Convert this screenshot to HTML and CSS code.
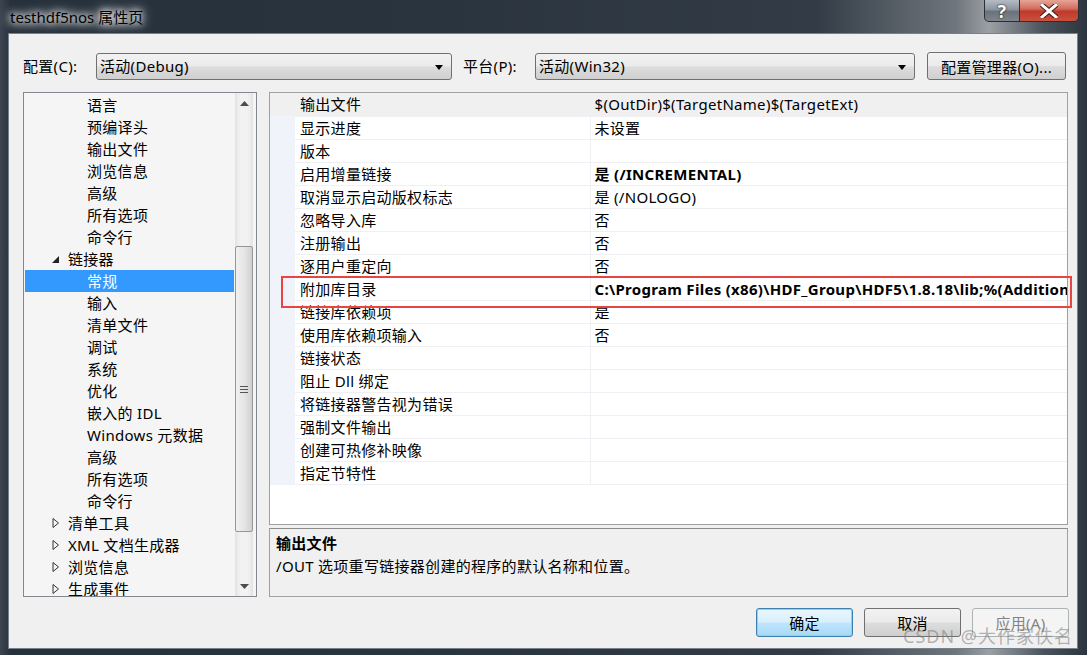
FILE: index.html
```html
<!DOCTYPE html>
<html lang="zh-CN">
<head>
  <meta charset="UTF-8">
  <title>testhdf5nos 属性页</title>
  <link rel="stylesheet" href="styles.css">
</head>
<body>
<div class="window">
  <div class="titlebar">
    <span class="title">testhdf5nos 属性页</span>
    <div class="caption-btns">
      <span class="cap-btn help">?</span>
      <span class="cap-btn close">
        <svg width="18" height="14" viewBox="0 0 18 14"><path d="M2 1 L16 13 M16 1 L2 13" stroke="#3a1a14" stroke-width="5" stroke-linecap="square"/><path d="M2 1 L16 13 M16 1 L2 13" stroke="#fff" stroke-width="3" stroke-linecap="square"/></svg>
      </span>
    </div>
  </div>

  <div class="client">
    <div class="config-row">
      <span class="lbl lbl-config">配置(C):</span>
      <div class="combo combo-config">活动(Debug)<span class="drop-arrow"></span></div>
      <span class="lbl lbl-platform">平台(P):</span>
      <div class="combo combo-platform">活动(Win32)<span class="drop-arrow"></span></div>
      <button class="btn btn-manager">配置管理器(O)...</button>
    </div>

    <div class="main">
      <!-- 左侧树 -->
      <div class="tree">
        <ul class="tree-list">
          <li class="lv2">语言</li>
          <li class="lv2">预编译头</li>
          <li class="lv2">输出文件</li>
          <li class="lv2">浏览信息</li>
          <li class="lv2">高级</li>
          <li class="lv2">所有选项</li>
          <li class="lv2">命令行</li>
          <li class="lv1"><span class="exp open"><svg width="8" height="8" viewBox="0 0 8 8"><path d="M7 0 L7 7 L0 7 Z" fill="#222"/></svg></span>链接器</li>
          <li class="lv2 selected">常规</li>
          <li class="lv2">输入</li>
          <li class="lv2">清单文件</li>
          <li class="lv2">调试</li>
          <li class="lv2">系统</li>
          <li class="lv2">优化</li>
          <li class="lv2">嵌入的 IDL</li>
          <li class="lv2">Windows 元数据</li>
          <li class="lv2">高级</li>
          <li class="lv2">所有选项</li>
          <li class="lv2">命令行</li>
          <li class="lv1"><span class="exp"><svg width="8" height="10" viewBox="0 0 8 10"><path d="M1 0.5 L6.5 5 L1 9.5 Z" fill="none" stroke="#333" stroke-width="1"/></svg></span>清单工具</li>
          <li class="lv1"><span class="exp"><svg width="8" height="10" viewBox="0 0 8 10"><path d="M1 0.5 L6.5 5 L1 9.5 Z" fill="none" stroke="#333" stroke-width="1"/></svg></span>XML 文档生成器</li>
          <li class="lv1"><span class="exp"><svg width="8" height="10" viewBox="0 0 8 10"><path d="M1 0.5 L6.5 5 L1 9.5 Z" fill="none" stroke="#333" stroke-width="1"/></svg></span>浏览信息</li>
          <li class="lv1"><span class="exp"><svg width="8" height="10" viewBox="0 0 8 10"><path d="M1 0.5 L6.5 5 L1 9.5 Z" fill="none" stroke="#333" stroke-width="1"/></svg></span>生成事件</li>
        </ul>
        <div class="scrollbar">
          <div class="sb-btn"><svg width="9" height="5" viewBox="0 0 9 5"><path d="M0 5 L4.5 0 L9 5 Z" fill="#4d4d4d"/></svg></div>
          <div class="sb-space-top"></div>
          <div class="sb-thumb"><span class="grip"></span></div>
          <div class="sb-space"></div>
          <div class="sb-btn"><svg width="9" height="5" viewBox="0 0 9 5"><path d="M0 0 L4.5 5 L9 0 Z" fill="#4d4d4d"/></svg></div>
        </div>
      </div>

      <!-- 右侧属性表 -->
      <div class="right-pane">
        <div class="grid">
          <div class="grid-body">
            <table class="props">
              <tr class="current"><td class="mg"></td><td class="nm">输出文件</td><td class="val">$(OutDir)$(TargetName)$(TargetExt)</td></tr>
              <tr><td class="mg"></td><td class="nm">显示进度</td><td class="val">未设置</td></tr>
              <tr><td class="mg"></td><td class="nm">版本</td><td class="val"></td></tr>
              <tr><td class="mg"></td><td class="nm">启用增量链接</td><td class="val bold">是 (/INCREMENTAL)</td></tr>
              <tr><td class="mg"></td><td class="nm">取消显示启动版权标志</td><td class="val">是 (/NOLOGO)</td></tr>
              <tr><td class="mg"></td><td class="nm">忽略导入库</td><td class="val">否</td></tr>
              <tr><td class="mg"></td><td class="nm">注册输出</td><td class="val">否</td></tr>
              <tr><td class="mg"></td><td class="nm">逐用户重定向</td><td class="val">否</td></tr>
              <tr><td class="mg"></td><td class="nm">附加库目录</td><td class="val bold">C:\Program Files (x86)\HDF_Group\HDF5\1.8.18\lib;%(AdditionalLibraryDirectories)</td></tr>
              <tr><td class="mg"></td><td class="nm">链接库依赖项</td><td class="val">是</td></tr>
              <tr><td class="mg"></td><td class="nm">使用库依赖项输入</td><td class="val">否</td></tr>
              <tr><td class="mg"></td><td class="nm">链接状态</td><td class="val"></td></tr>
              <tr><td class="mg"></td><td class="nm">阻止 Dll 绑定</td><td class="val"></td></tr>
              <tr><td class="mg"></td><td class="nm">将链接器警告视为错误</td><td class="val"></td></tr>
              <tr><td class="mg"></td><td class="nm">强制文件输出</td><td class="val"></td></tr>
              <tr><td class="mg"></td><td class="nm">创建可热修补映像</td><td class="val"></td></tr>
              <tr><td class="mg"></td><td class="nm">指定节特性</td><td class="val"></td></tr>
            </table>
          </div>
          <!-- 红框标注 -->
          <div class="annot"></div>
        </div>
        <div class="desc">
          <div class="desc-title">输出文件</div>
          <div class="desc-text">/OUT 选项重写链接器创建的程序的默认名称和位置。</div>
        </div>
      </div>
    </div>

    <div class="buttons">
      <button class="btn btn-ok">确定</button>
      <button class="btn">取消</button>
      <button class="btn btn-disabled">应用(A)</button>
    </div>
    <span class="watermark">CSDN @大作家佚名</span>
  </div>
</div>
</body>
</html>
```

FILE: styles.css
```css
* { box-sizing: border-box; }
body {
  margin: 0;
  font-family: 'Noto Sans', 'Noto Sans CJK SC', sans-serif;
  font-size: 15px;
  letter-spacing: 0.3px;
  color: #000;
  background: #2b343e;
}
.window {
  width: 1087px;
  height: 655px;
  background: linear-gradient(90deg, #3d4650 0%, #27313b 1%, #2a343e 40%, #333c46 75%, #6f767d 88%, #9ba0a5 91%, #4a525a 96%, #2c353f 100%);
  overflow: hidden;
}
.titlebar {
  height: 33px;
  display: flex;
  justify-content: space-between;
  align-items: flex-start;
  padding: 0 8px 0 10px;
}
.title {
  margin-top: 6px;
  line-height: 22px;
  padding: 0 6px 0 0;
  letter-spacing: 0;
  color: #000;
  text-shadow: 0 0 6px #fff, 0 0 10px #fff, 0 0 14px rgba(255,255,255,0.9);
}
.caption-btns {
  display: flex;
  height: 22px;
}
.cap-btn {
  display: flex;
  align-items: center;
  justify-content: center;
  height: 22px;
  border: 1px solid #2a2f36;
  border-top: none;
}
.cap-btn.help {
  width: 36px;
  border-radius: 0 0 0 5px;
  background: linear-gradient(180deg, #b5bcc4 0%, #8c959e 45%, #6a737c 55%, #7d868f 100%);
  color: #fff;
  font-weight: bold;
  font-size: 18px;
  text-shadow: 0 0 2px #222, 0 0 1px #000;
}
.cap-btn.close {
  width: 59px;
  border-left: none;
  border-radius: 0 0 5px 0;
  background: linear-gradient(180deg, #e6a496 0%, #d2705f 40%, #c0392a 55%, #c9513d 100%);
}

.client {
  margin-left: 8px;
  width: 1070px;
  height: 616px;
  background: #f0f0f0;
  border: 1px solid #75818d;
  position: relative;
}
.config-row {
  display: flex;
  align-items: center;
  padding: 18px 0 0 14px;
  height: 46px;
}
.lbl {
  line-height: 27px;
}
.lbl-config { width: 73px; }
.lbl-platform { width: 72px; margin-left: 11px; }
.combo {
  position: relative;
  height: 27px;
  line-height: 25px;
  padding-left: 3px;
  border: 1px solid #707070;
  border-radius: 3px;
  background: linear-gradient(180deg, #f2f2f2 0%, #ebebeb 48%, #dddddd 52%, #cfcfcf 100%);
}
.combo-config { width: 356px; }
.combo-platform { width: 380px; }
.drop-arrow {
  position: absolute;
  right: 8px;
  top: 11px;
  width: 0;
  height: 0;
  border-left: 4px solid transparent;
  border-right: 4px solid transparent;
  border-top: 5px solid #000;
}
.btn {
  font-family: inherit;
  font-size: 15px;
  letter-spacing: 0.3px;
  height: 29px;
  width: 97px;
  padding: 0;
  border: 1px solid #707070;
  border-radius: 3px;
  background: linear-gradient(180deg, #f2f2f2 0%, #ebebeb 48%, #dddddd 52%, #cfcfcf 100%);
  color: #000;
}
.btn-manager {
  width: 139px;
  height: 28px;
  margin-left: 12px;
}

.main {
  display: flex;
  margin: 12px 0 0 14px;
  height: 505px;
}
.tree {
  width: 234px;
  display: flex;
  border: 1px solid #828790;
  background: #f5f5f5;
  overflow: hidden;
}
.tree-list {
  list-style: none;
  margin: 0;
  padding: 1px 0 0 1px;
  flex: 1;
  overflow: hidden;
}
.tree-list li {
  height: 22px;
  line-height: 22px;
  white-space: nowrap;
  display: flex;
  align-items: center;
}
.tree-list li.lv2 { padding-left: 62px; }
.tree-list li.lv1 { padding-left: 27px; }
.exp {
  width: 16px;
  display: flex;
  align-items: center;
}
.exp.open { padding-top: 2px; }
.tree-list li.selected {
  background: #3399ff;
  color: #fff;
}
.scrollbar {
  width: 18px;
  margin: 0 3px 0 1px;
  display: flex;
  flex-direction: column;
  background: linear-gradient(90deg, #e3e3e3 0%, #f2f2f2 30%, #f2f2f2 70%, #e3e3e3 100%);
}
.sb-btn {
  height: 20px;
  display: flex;
  align-items: center;
  justify-content: center;
}
.sb-space-top { height: 133px; }
.sb-space { flex: 1; }
.sb-thumb {
  height: 286px;
  border: 1px solid #979797;
  border-radius: 2px;
  background: linear-gradient(90deg, #f0f0f0 0%, #e6e6e6 50%, #d0d0d0 100%);
  display: flex;
  align-items: center;
  justify-content: center;
}
.grip {
  width: 8px;
  height: 7px;
  border-top: 1px solid #555;
  border-bottom: 1px solid #555;
  position: relative;
}
.grip::after {
  content: "";
  position: absolute;
  left: 0; right: 0; top: 2px;
  border-top: 1px solid #555;
}

.right-pane {
  width: 799px;
  margin-left: 12px;
  display: flex;
  flex-direction: column;
  gap: 3px;
}
.grid {
  position: relative;
  height: 433px;
}
.grid-body {
  height: 100%;
  border: 1px solid #a0a0a0;
  background: #fff;
  overflow: hidden;
}
.props {
  border-collapse: collapse;
  table-layout: fixed;
  width: 1200px;
}
.props td {
  height: 23px;
  padding: 0;
  line-height: 22px;
  white-space: nowrap;
  overflow: hidden;
  border-bottom: 1px solid #f0f0f4;
}
.props td.mg {
  width: 25px;
  background: #f0f4fa;
  border-bottom-color: #f0f4fa;
}
.props td.nm {
  width: 295px;
  padding-left: 5px;
  border-right: 1px solid #f0f0f4;
}
.props td.val {
  padding-left: 4px;
}
.props td.bold { font-weight: bold; }
.props tr.current td { background: #f0f0f0; }
.annot {
  position: absolute;
  left: 12px;
  top: 184px;
  width: 791px;
  height: 32px;
  border: 2px solid #e84444;
}
.desc {
  flex: 1;
  border: 1px solid #a0a0a0;
  border-top-color: #8c8c8c;
  background: #f0f0f0;
  padding: 3px 6px;
  line-height: 23px;
}
.desc-title { font-weight: bold; }

.buttons {
  display: flex;
  justify-content: flex-end;
  gap: 11px;
  padding: 11px 8px 0 0;
}
.btn-ok {
  border-color: #3c7fb1;
  background: linear-gradient(180deg, #eaf6fd 0%, #d9f0fc 48%, #bee6fd 52%, #a7d9f5 100%);
  box-shadow: inset 0 0 0 1px #8fd0f5;
}
.btn-disabled {
  border-color: #adb2b5;
  background: #f4f4f4;
  color: #838383;
}
.watermark {
  position: absolute;
  left: 894px;
  top: 591px;
  font-size: 18px;
  line-height: 22px;
  letter-spacing: 1px;
  color: rgba(120, 120, 120, 0.55);
  white-space: nowrap;
}
```
